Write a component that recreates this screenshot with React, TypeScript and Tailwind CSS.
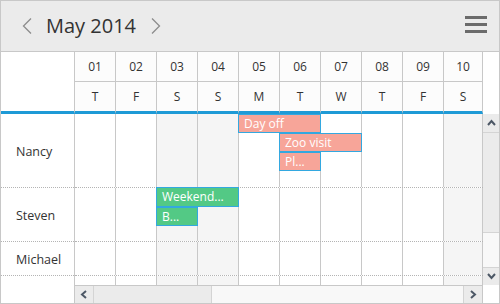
import React from "react";

const days = [
  { d: "01", w: "T" },
  { d: "02", w: "F" },
  { d: "03", w: "S", we: true },
  { d: "04", w: "S", we: true },
  { d: "05", w: "M" },
  { d: "06", w: "T" },
  { d: "07", w: "W" },
  { d: "08", w: "T" },
  { d: "09", w: "F" },
  { d: "10", w: "S", we: true },
];

const rows = [
  { name: "Nancy", h: "h-[74px]" },
  { name: "Steven", h: "h-[54px]" },
  { name: "Michael", h: "h-[34px]" },
];

const events = [
  { text: "Day off", left: "left-[163px]", top: "top-0", w: "w-[83px]", h: "h-[19px]", color: "bg-[#f7a599]" },
  { text: "Zoo visit", left: "left-[204px]", top: "top-[19px]", w: "w-[83px]", h: "h-[19px]", color: "bg-[#f7a599]" },
  { text: "Pl...", left: "left-[204px]", top: "top-[38px]", w: "w-[42px]", h: "h-[19px]", color: "bg-[#f7a599]" },
  { text: "Weekend...", left: "left-[81px]", top: "top-[73px]", w: "w-[83px]", h: "h-[20px]", color: "bg-[#53c985]" },
  { text: "B...", left: "left-[81px]", top: "top-[93px]", w: "w-[42px]", h: "h-[19px]", color: "bg-[#53c985]" },
];

const cols = "grid grid-cols-[repeat(9,41px)_39px]";

function Chevron({ dir }: { dir: "left" | "right" }) {
  return (
    <svg width="10" height="16" viewBox="0 0 10 16" className="shrink-0">
      <polyline
        points={dir === "left" ? "9,0.5 1.5,8 9,15.5" : "1,0.5 8.5,8 1,15.5"}
        fill="none"
        stroke="#8c8c8c"
        strokeWidth="1.3"
      />
    </svg>
  );
}

function SmallArrow({ dir }: { dir: "up" | "down" | "left" | "right" }) {
  const pts = {
    up: "1,6 4.5,2 8,6",
    down: "1,2 4.5,6 8,2",
    left: "6,1 2,4.5 6,8",
    right: "2,1 6,4.5 2,8",
  }[dir];
  return (
    <svg width="9" height="9" viewBox="0 0 9 9">
      <polyline points={pts} fill="none" stroke="#4d5866" strokeWidth="2" />
    </svg>
  );
}

function DayCells({ filler }: { filler?: boolean }) {
  return (
    <>
      {days.map((day) => (
        <div
          key={day.d}
          className={`border-r border-[#c8c8c8] ${day.we ? "bg-[#f5f5f5]" : "bg-white"} ${filler ? "h-full" : ""}`}
        />
      ))}
    </>
  );
}

export default function App() {
  return (
    <div className="w-[500px] h-[304px] border border-[#c8c8c8] bg-white flex flex-col overflow-hidden font-['Open_Sans',sans-serif] text-[#333]">
      {/* Toolbar */}
      <header className="h-[51px] shrink-0 bg-[#ebebeb] border-b border-[#c8c8c8] flex items-center pl-[21px] pr-[12px]">
        <Chevron dir="left" />
        <span className="ml-[14px] text-[20px] leading-none text-[#333] pb-[1px]">May 2014</span>
        <span className="ml-[15px]">
          <Chevron dir="right" />
        </span>
        <div className="ml-auto flex flex-col gap-[4px] mb-[4px]">
          <div className="w-[22px] h-[3px] bg-[#6b6b6b]" />
          <div className="w-[22px] h-[3px] bg-[#6b6b6b]" />
          <div className="w-[22px] h-[3px] bg-[#6b6b6b]" />
        </div>
      </header>

      {/* Timeline header */}
      <div className="h-[62px] shrink-0 flex">
        <div className="w-[74px] border-r border-[#c8c8c8] border-b-[3px] border-b-[#1e9ad6]" />
        <div className="w-[408px] flex flex-col">
          <div className={`${cols} h-[30px] border-b border-[#c8c8c8]`}>
            {days.map((day) => (
              <div key={day.d} className="border-r border-[#c8c8c8] bg-[#fcfcfc] flex items-center justify-center text-[12px]">
                {day.d}
              </div>
            ))}
          </div>
          <div className={`${cols} h-[32px]`}>
            {days.map((day) => (
              <div
                key={day.d}
                className="border-r border-[#c8c8c8] border-b-[3px] border-b-[#1e9ad6] bg-[#fcfcfc] flex items-center justify-center text-[12px]"
              >
                {day.w}
              </div>
            ))}
          </div>
        </div>
        <div className="flex-1" />
      </div>

      {/* Body */}
      <div className="flex-1 flex min-h-0">
        {/* Resources */}
        <div className="w-[74px] border-r border-[#c8c8c8] flex flex-col">
          {rows.map((r) => (
            <div
              key={r.name}
              className={`${r.h} border-b border-dotted border-[#b4b4b4] flex items-center pl-[15px] pt-[3px] text-[12.5px]`}
            >
              {r.name}
            </div>
          ))}
        </div>

        {/* Grid + horizontal scrollbar */}
        <div className="w-[408px] flex flex-col">
          <div className="relative flex-1 flex flex-col">
            {rows.map((r) => (
              <div key={r.name} className={`${cols} ${r.h} border-b border-dotted border-[#b4b4b4]`}>
                <DayCells />
              </div>
            ))}
            <div className={`${cols} flex-1`}>
              <DayCells filler />
            </div>

            {events.map((e) => (
              <div
                key={e.text}
                className={`absolute ${e.left} ${e.top} ${e.w} ${e.h} ${e.color} border border-[#33a8e0] text-white text-[12px] leading-none pl-[5px] flex items-center whitespace-nowrap overflow-hidden`}
              >
                {e.text}
              </div>
            ))}
          </div>

          <div className="h-[18px] shrink-0 border-t border-r border-[#c8c8c8] flex bg-[#f8f8f8]">
            <div className="w-[19px] bg-[#ebebeb] border-r border-[#d4d4d4] flex items-center justify-center">
              <SmallArrow dir="left" />
            </div>
            <div className="w-[118px] bg-[#ebebeb] border-r border-[#d4d4d4]" />
            <div className="flex-1" />
            <div className="w-[19px] bg-[#ebebeb] border-l border-[#d4d4d4] flex items-center justify-center">
              <SmallArrow dir="right" />
            </div>
          </div>
        </div>

        {/* Vertical scrollbar */}
        <div className="flex-1 flex flex-col">
          <div className="flex-1 flex flex-col bg-[#f8f8f8]">
            <div className="h-[19px] bg-[#ebebeb] border-b border-[#d4d4d4] flex items-center justify-center">
              <SmallArrow dir="up" />
            </div>
            <div className="h-[100px] bg-[#ebebeb] border-b border-[#d4d4d4]" />
            <div className="flex-1" />
            <div className="h-[18px] bg-[#ebebeb] border-t border-[#d4d4d4] flex items-center justify-center">
              <SmallArrow dir="down" />
            </div>
          </div>
          <div className="h-[18px] shrink-0 bg-white" />
        </div>
      </div>
    </div>
  );
}
